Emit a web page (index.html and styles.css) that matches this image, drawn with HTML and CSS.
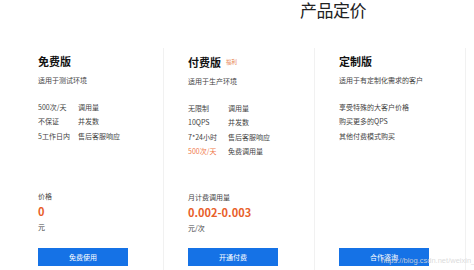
FILE: index.html
```html
<!DOCTYPE html>
<html lang="zh">
<head>
<meta charset="utf-8">
<link rel="stylesheet" href="styles.css">
</head>
<body>
<div class="page">
  <h1 class="title">产品定价</h1>
  <div class="cards">
    <div class="card">
      <div class="card-title">免费版</div>
      <div class="card-sub">适用于测试环境</div>
      <div class="features">
        <span>500次/天</span><span>调用量</span>
        <span>不保证</span><span>并发数</span>
        <span>5工作日内</span><span>售后客服响应</span>
      </div>
      <div class="price">
        <div class="price-label">价格</div>
        <div class="price-value">0</div>
        <div class="price-unit">元</div>
      </div>
      <button class="btn">免费使用</button>
    </div>
    <div class="card">
      <div class="card-title">付费版<span class="badge">福利</span></div>
      <div class="card-sub">适用于生产环境</div>
      <div class="features">
        <span>无限制</span><span>调用量</span>
        <span>10QPS</span><span>并发数</span>
        <span>7*24小时</span><span>售后客服响应</span>
        <span class="hl">500次/天</span><span>免费调用量</span>
      </div>
      <div class="price">
        <div class="price-label">月计费调用量</div>
        <div class="price-value">0.002-0.003</div>
        <div class="price-unit">元/次</div>
      </div>
      <button class="btn">开通付费</button>
    </div>
    <div class="card">
      <div class="card-title">定制版</div>
      <div class="card-sub">适用于有定制化需求的客户</div>
      <div class="features single">
        <span>享受特殊的大客户价格</span>
        <span>购买更多的QPS</span>
        <span>其他付费模式购买</span>
      </div>
      <button class="btn">合作咨询</button>
    </div>
  </div>
  <div class="watermark">https://blog.csdn.net/weixin_4</div>
</div>
</body>
</html>
```
FILE: styles.css
```css
html, body {
  margin: 0;
  padding: 0;
  background: #fff;
}
body {
  font-family: "Noto Sans CJK SC", "Noto Sans", sans-serif;
  color: #333;
  overflow: hidden;
}
.page {
  position: relative;
  width: 474px;
  height: 270px;
  overflow: hidden;
}
.title {
  margin: 0;
  padding-left: 300px;
  font-size: 17px;
  line-height: 19px;
  font-weight: 400;
  color: #222;
  letter-spacing: -0.5px;
}
.cards {
  display: flex;
  margin-top: 29px;
  padding-left: 13px;
}
.card {
  width: 125px;
  height: 222px;
  padding-left: 25px;
  border-right: 1px solid #f1f1f1;
  display: flex;
  flex-direction: column;
}
.card + .card {
  padding-left: 24px;
  width: 126px;
}
.card-title {
  margin-top: 6px;
  font-size: 11px;
  line-height: 14px;
  font-weight: 700;
  color: #111;
  display: flex;
  align-items: center;
}
.badge {
  font-size: 5.5px;
  font-weight: 400;
  color: #e8824f;
  margin-left: 5px;
  margin-top: 1px;
}
.card-sub {
  margin-top: 6px;
  font-size: 7px;
  line-height: 12px;
  color: #444;
}
.features {
  margin-top: 13.5px;
  height: 58px;
  display: grid;
  grid-template-columns: 40px auto;
  grid-auto-rows: 14.5px;
  align-items: center;
  font-size: 7px;
  color: #444;
}
.features.single {
  grid-template-columns: auto;
}
.features .hl {
  color: #f0784a;
}
.price {
  margin-top: 31px;
  font-size: 7px;
  color: #444;
}
.price-label {
  line-height: 14px;
}
.price-value {
  font-size: 11px;
  line-height: 16px;
  font-weight: 700;
  color: #e8602a;
}
.price-unit {
  margin-top: 1px;
  line-height: 14px;
}
.btn {
  margin-top: auto;
  margin-bottom: 4px;
  width: 90px;
  height: 18px;
  padding: 0;
  border: 0;
  border-radius: 0;
  background: #1572e6;
  color: #fff;
  font-family: "Noto Sans CJK SC", sans-serif;
  font-size: 7px;
  line-height: 18px;
}
.watermark {
  position: absolute;
  left: 381px;
  top: 256px;
  font-family: "Liberation Sans", sans-serif;
  font-size: 7.5px;
  color: rgba(215, 215, 215, 0.9);
  white-space: nowrap;
}
```
